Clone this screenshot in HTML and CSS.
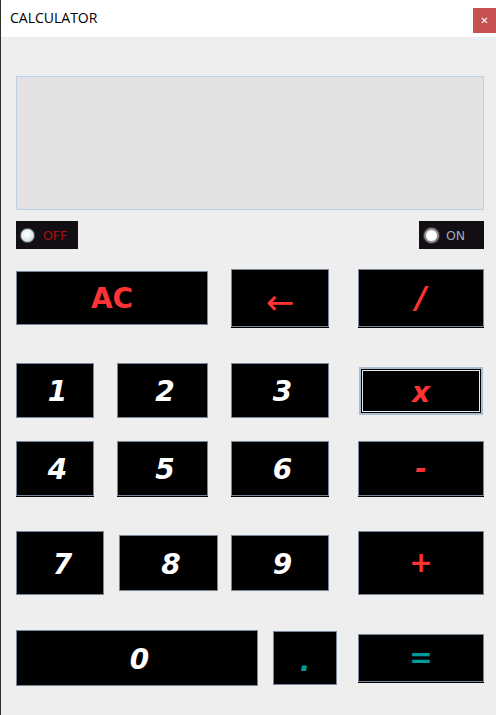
FILE: index.html
```html
<!DOCTYPE html>
<html lang="en">
<head>
<meta charset="utf-8">
<title>CALCULATOR</title>
<link rel="stylesheet" href="styles.css">
</head>
<body>
<div class="window">
  <header class="titlebar">
    <span class="title">CALCULATOR</span>
    <button class="close">&#x2715;</button>
  </header>
  <main class="content">
    <div class="display"></div>
    <div class="toggles">
      <div class="toggle off"><span class="radio"></span><span class="tlabel">OFF</span></div>
      <div class="toggle on"><span class="radio"></span><span class="tlabel">ON</span></div>
    </div>
    <div class="row row1">
      <button class="key op k-ac">AC</button>
      <button class="key op k-back ul">&larr;</button>
      <button class="key op k-div ul">/</button>
    </div>
    <div class="row row2">
      <button class="key num k-c1">1</button>
      <button class="key num k-c2">2</button>
      <button class="key num k-c3">3</button>
      <button class="key op k-mul">x</button>
    </div>
    <div class="row row3">
      <button class="key num k-c1 ul">4</button>
      <button class="key num k-c2 ul">5</button>
      <button class="key num k-c3 ul">6</button>
      <button class="key op k-c4 ul">-</button>
    </div>
    <div class="row row4">
      <button class="key num k-7">7</button>
      <button class="key num k-8">8</button>
      <button class="key num k-9">9</button>
      <button class="key op k-plus">+</button>
    </div>
    <div class="row row5">
      <button class="key num k-0">0</button>
      <button class="key teal k-dot">.</button>
      <button class="key teal k-eq ul">=</button>
    </div>
  </main>
</div>
</body>
</html>
```
FILE: styles.css
```css
* { box-sizing: border-box; }
html, body { margin: 0; padding: 0; }
body { background: #eeeeee; }

.window {
  width: 496px;
  height: 715px;
  border-left: 1px solid #2e2e2e;
  background: #eeeeee;
}

.titlebar {
  height: 37px;
  background: #ffffff;
  display: flex;
  justify-content: space-between;
  align-items: flex-start;
}
.title {
  font-family: "Open Sans", "Noto Sans", sans-serif;
  font-size: 14px;
  line-height: 20px;
  color: #000;
  margin: 8px 0 0 9px;
}
.close {
  margin-top: 8px;
  width: 23px;
  height: 25px;
  border: 0;
  padding: 0;
  background: #c75050;
  color: #fff;
  font-family: "DejaVu Sans", sans-serif;
  font-weight: bold;
  font-size: 10px;
  line-height: 25px;
}

.content {
  padding: 39px 12px 0 15px;
}

.display {
  height: 134px;
  background: #e3e1e3;
  border: 1px solid #b9d1ea;
}

.toggles {
  margin-top: 11px;
  display: flex;
  justify-content: space-between;
}
.toggle {
  height: 28px;
  display: flex;
  align-items: center;
  background: #130e13;
  font-family: "DejaVu Sans", sans-serif;
  font-size: 12.5px;
}
.toggle.off { width: 62px; padding-left: 4px; gap: 8px; color: #b00d0d; }
.toggle.on { width: 65px; padding-left: 5px; gap: 7px; color: #9eabc0; }
.radio {
  width: 15px;
  height: 15px;
  border-radius: 50%;
  flex: none;
}
.off .radio {
  border: 1px solid #59626c;
  background: radial-gradient(circle at 45% 40%, #ffffff 0, #eef2f7 35%, #b7c3cf 100%);
}
.on .radio {
  border: 2px solid #8e8e8e;
  background: #ffffff;
  box-shadow: 0 0 0 1px #3a3a3a;
}

.row {
  display: flex;
  align-items: center;
}
.row1 { margin-top: 20px; height: 58px; }
.row2 { margin-top: 36px; height: 55px; }
.row3 { margin-top: 23px; height: 55px; }
.row4 { margin-top: 35px; height: 64px; }
.row5 { margin-top: 35px; height: 56px; }

.key {
  flex: none;
  padding: 0;
  margin: 0;
  background: #000;
  border: 1px solid #778797;
  font-family: "DejaVu Sans", "Verdana", sans-serif;
  font-weight: bold;
  font-style: italic;
  font-size: 28px;
  line-height: 1;
  display: flex;
  align-items: center;
  justify-content: center;
}
.key.ul { box-shadow: 0 1px 0 #000; }
.num { color: #ffffff; padding-left: 5px; padding-top: 3px; }
.op { color: #ff3333; }
.teal { color: #00999b; }

.k-ac { width: 192px; height: 54px; font-style: normal; padding-top: 2px; }
.k-back { margin-left: 23px; width: 98px; height: 58px; font-style: normal; font-weight: normal; font-size: 34px; padding-top: 7px; }
.k-div { margin-left: 29px; width: 126px; height: 58px; font-size: 30px; }

.k-c1 { width: 78px; }
.k-c2 { margin-left: 23px; width: 91px; }
.k-c3 { margin-left: 23px; width: 98px; }
.k-c4 { margin-left: 29px; width: 126px; }
.row2 .key, .row3 .key { height: 55px; }
.k-mul {
  margin-left: 30px;
  width: 124px;
  height: 48px !important;
  border: 2px solid #a9bdd2;
  box-shadow: inset 0 0 0 1px #000, inset 0 0 0 2px #e6ecf2;
  padding-top: 4px;
}

.k-7 { width: 88px; height: 64px; }
.k-8 { margin-left: 15px; width: 99px; height: 56px; }
.k-9 { margin-left: 13px; width: 98px; height: 56px; }
.k-plus { margin-left: 29px; width: 126px; height: 64px; }

.k-0 { width: 242px; height: 56px; }
.k-dot { margin-left: 15px; width: 64px; height: 54px; padding-top: 8px; }
.k-eq { margin-left: 21px; width: 126px; height: 48px; }
```
